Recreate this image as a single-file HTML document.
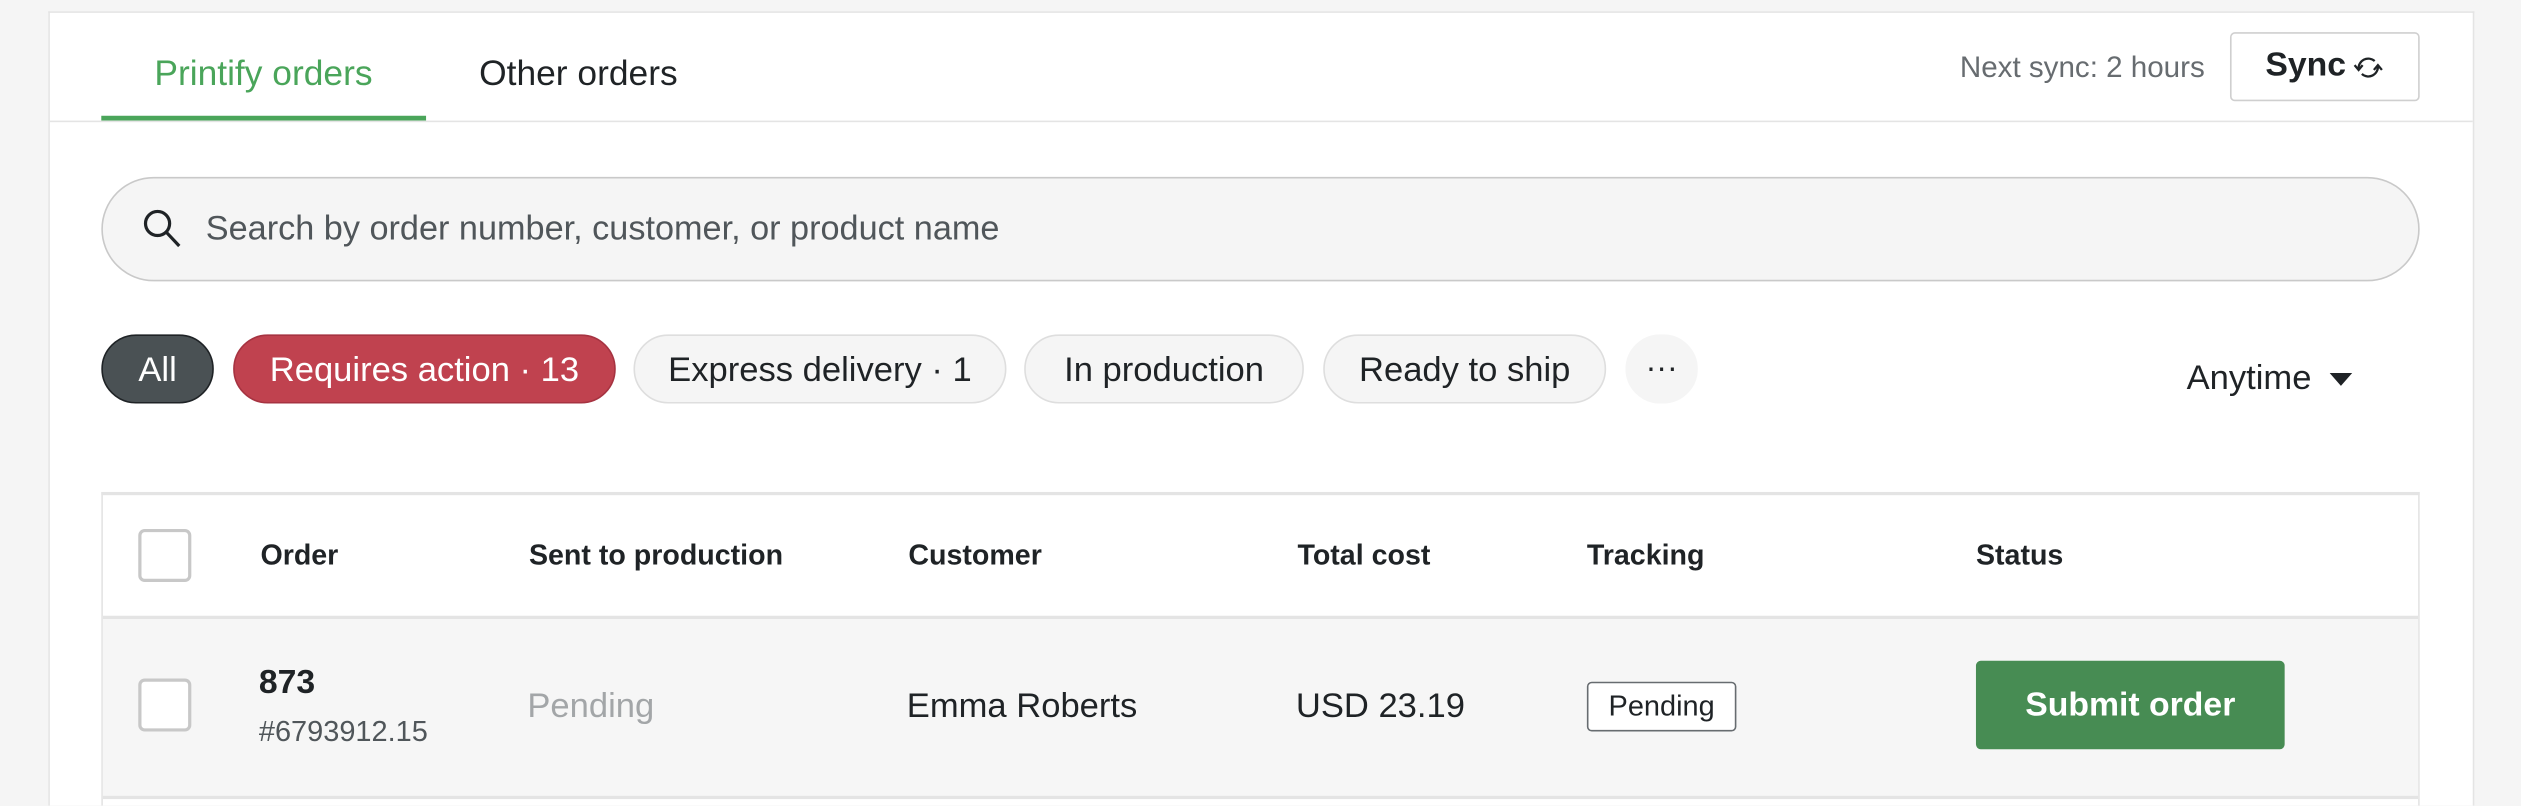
<!DOCTYPE html>
<html><head><meta charset="utf-8"><style>
html,body{margin:0;padding:0;background:#f5f5f5;width:2521px;height:806px;overflow:hidden}
#w{position:absolute;left:0;top:0;width:2521px;height:806px;overflow:hidden}
#s{position:absolute;left:0;top:0;width:1568px;height:501px;overflow:hidden;transform:scale(1.60778);transform-origin:0 0;font-family:"Liberation Sans",sans-serif;color:#1f2326}
.a{position:absolute;white-space:nowrap}
.card{left:30px;top:7px;width:1507px;height:494px;background:#fff;border:1px solid #e4e4e4;border-bottom:0}
.chip{position:absolute;top:208px;height:41px;border:1px solid #dedede;border-radius:22px;background:#f5f5f5;font-size:21.5px;line-height:43px;text-align:center;box-sizing:content-box}
.h{font-size:17.8px;font-weight:bold;top:335px}
.cb{position:absolute;left:86px;width:29px;height:29px;border:2px solid #c8c8c8;border-radius:4px;background:#fff}
.r{font-size:21.5px;top:427px}
</style></head><body><div id="w"><div id="s">
<div class="a card"></div>
<div class="a" style="left:96px;top:33px;font-size:22px;color:#4aa55a">Printify orders</div>
<div class="a" style="left:63px;top:72px;width:202px;height:3px;background:#4aa55a"></div>
<div class="a" style="left:298px;top:33px;font-size:22px">Other orders</div>
<div class="a" style="left:31px;top:75px;width:1507px;height:1px;background:#e4e4e4"></div>
<div class="a" style="left:1219px;top:31px;font-size:18.4px;color:#676c70">Next sync: 2 hours</div>
<div class="a" style="left:1387px;top:20px;width:116px;height:41px;border:1px solid #cfcfcf;border-radius:3px;background:#fff"></div>
<div class="a" style="left:1409px;top:29px;font-size:21px;font-weight:bold">Sync</div>
<svg class="a" style="left:1463px;top:33px" width="20" height="18" viewBox="0 0 20 18" fill="none" stroke="#1f2326" stroke-width="1.4"><path d="M4 10a6 6 0 0 1 10-5"/><path d="M1.5 7.5l2.5 3 2.5-3"/><path d="M16 8a6 6 0 0 1-10 5"/><path d="M18.5 10.5l-2.5-3-2.5 3"/></svg>
<div class="a" style="left:63px;top:110px;width:1440px;height:63px;border:1px solid #c9c9c9;border-radius:33px;background:#f5f5f5"></div>
<svg class="a" style="left:88px;top:129px" width="26" height="26" viewBox="0 0 26 26" fill="none" stroke="#1f2326" stroke-width="2"><circle cx="10" cy="10" r="7.5"/><path d="M15.5 15.5l8 8.5"/></svg>
<div class="a" style="left:128px;top:130px;font-size:21.3px;color:#50565a">Search by order number, customer, or product name</div>
<div class="chip" style="left:63px;width:68px;background:#4a5154;border-color:#1f2326;color:#fff">All</div>
<div class="chip" style="left:145px;width:236px;background:#c0424f;border-color:#a63341;color:#fff">Requires action · 13</div>
<div class="chip" style="left:394px;width:230px">Express delivery · 1</div>
<div class="chip" style="left:637px;width:172px">In production</div>
<div class="chip" style="left:823px;width:174px">Ready to ship</div>
<div class="chip" style="left:1011px;width:43px;border-color:#f5f5f5;line-height:40px;font-size:20px">···</div>
<div class="a" style="left:1360px;top:223px;font-size:21.5px">Anytime</div>
<div class="a" style="left:1449px;top:232px;width:0;height:0;border-left:7px solid transparent;border-right:7px solid transparent;border-top:8px solid #1f2326"></div>
<div class="a" style="left:63px;top:306px;width:1440px;height:195px;border:1px solid #e4e4e4;border-top:2px solid #e4e4e4;border-bottom:0;background:#fff"></div>
<div class="a" style="left:64px;top:383px;width:1440px;height:110px;background:#f6f6f6;border-top:2px solid #e4e4e4;border-bottom:2px solid #e4e4e4"></div>
<div class="cb" style="top:329px"></div>
<div class="a h" style="left:162px">Order</div>
<div class="a h" style="left:329px">Sent to production</div>
<div class="a h" style="left:565px">Customer</div>
<div class="a h" style="left:807px">Total cost</div>
<div class="a h" style="left:987px">Tracking</div>
<div class="a h" style="left:1229px">Status</div>
<div class="cb" style="top:422px"></div>
<div class="a" style="left:161px;top:413px;font-size:21px;font-weight:bold">873</div>
<div class="a" style="left:161px;top:445px;font-size:18px;color:#50565a">#6793912.15</div>
<div class="a r" style="left:328px;color:#a3a6a8">Pending</div>
<div class="a r" style="left:564px">Emma Roberts</div>
<div class="a r" style="left:806px">USD 23.19</div>
<div class="a" style="left:987px;top:424px;width:91px;height:29px;border:1px solid #676c70;border-radius:3px;font-size:18px;line-height:29px;text-align:center;background:#fff">Pending</div>
<div class="a" style="left:1229px;top:411px;width:192px;height:55px;background:#478c53;border-radius:3px;color:#fff;font-size:21px;font-weight:bold;line-height:55px;text-align:center">Submit order</div>
</div></div></body></html>
